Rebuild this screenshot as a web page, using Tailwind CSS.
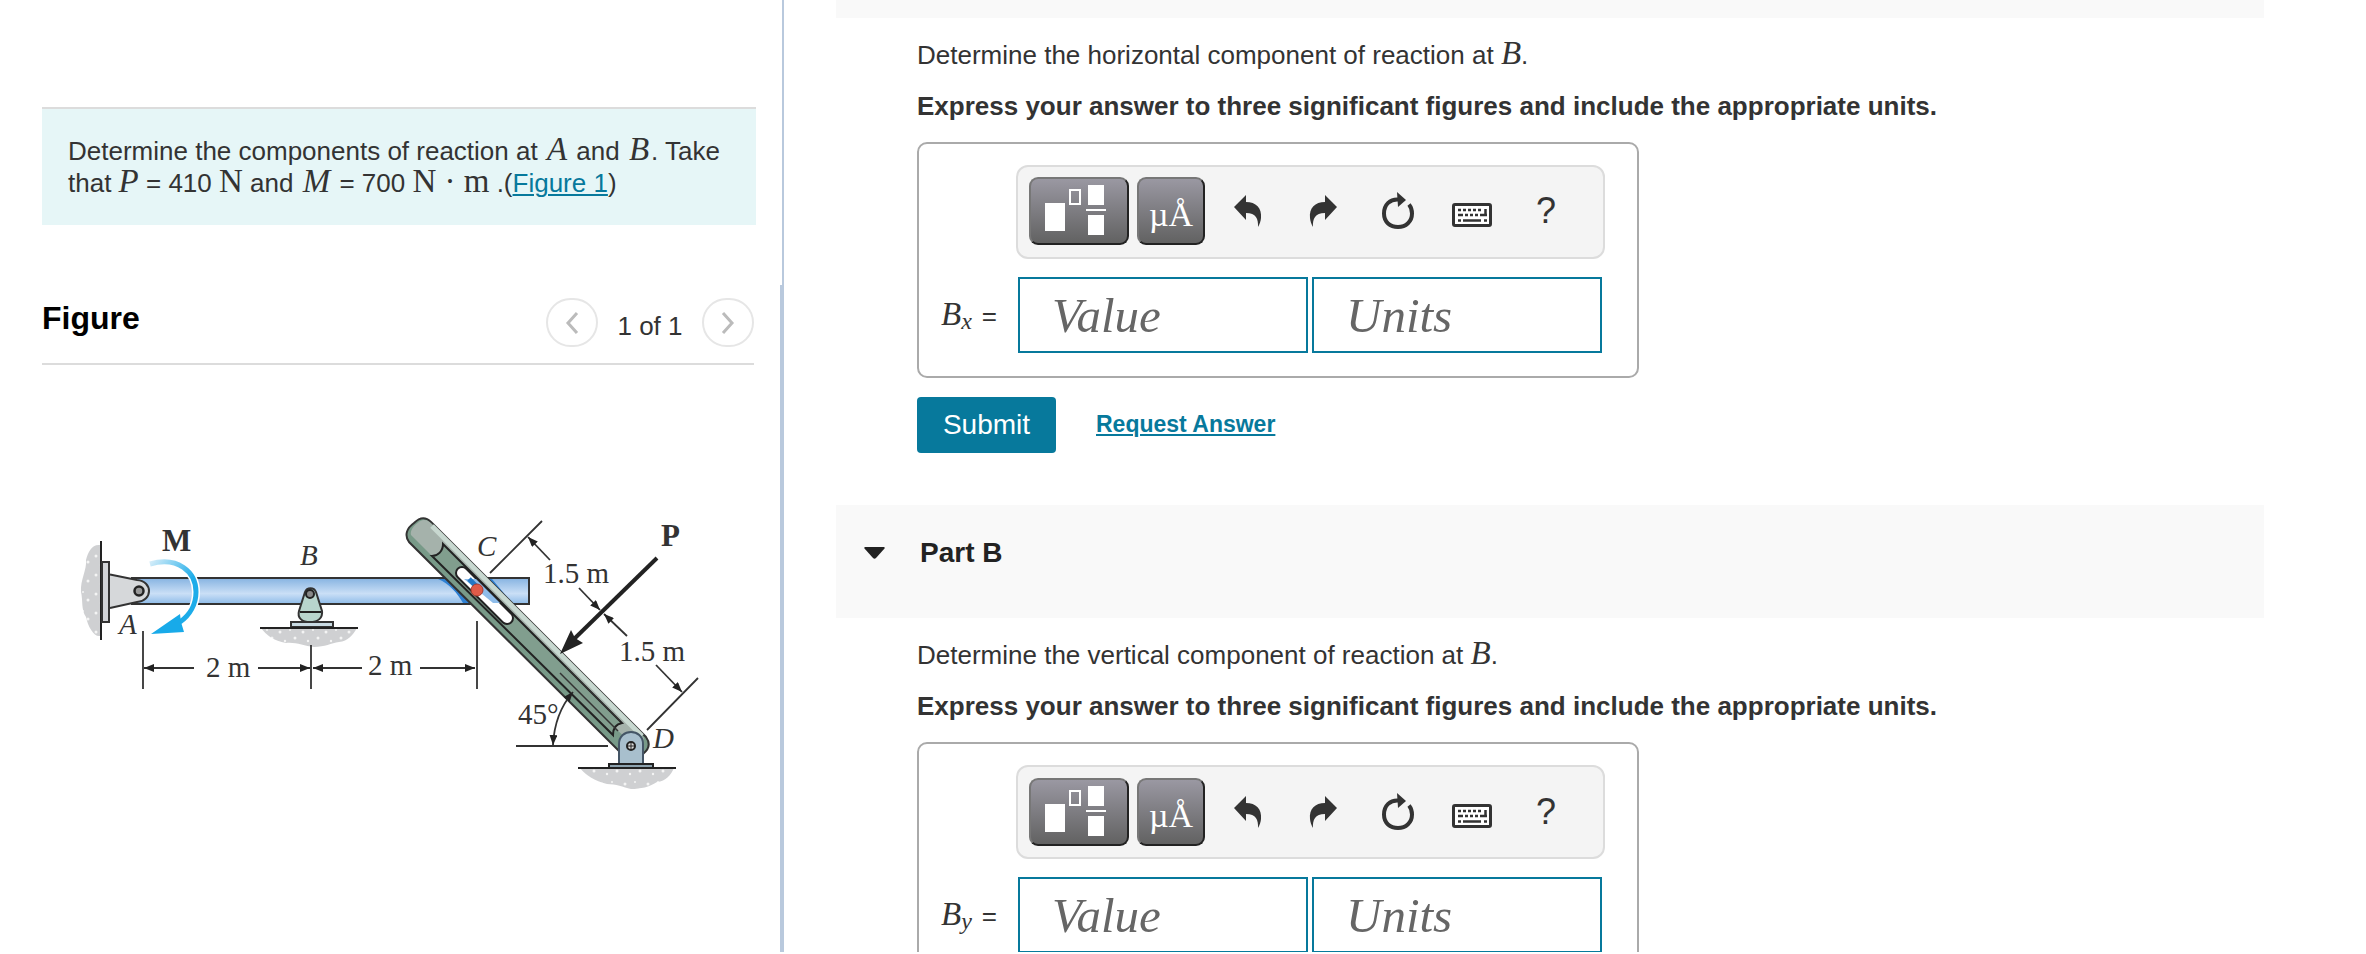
<!DOCTYPE html>
<html lang="en">
<head>
<meta charset="utf-8">
<meta name="viewport" content="width=device-width, initial-scale=1">
<title>Components of reaction</title>
<script src="https://cdn.jsdelivr.net/npm/@tailwindcss/browser@4"></script>
</head>
<body class="bg-white font-['Liberation_Sans',Arial,sans-serif] text-[26px] leading-8 text-[#333]">

<!-- Shared icons -->
<svg class="hidden" aria-hidden="true">
  <symbol id="templates" viewBox="0 0 72 52">
    <g fill="#fff"><rect x="2" y="18" width="20" height="28"/><rect x="45" y="0" width="16" height="20"/><rect x="43" y="24" width="20" height="2"/><rect x="45" y="30" width="16" height="20"/></g>
    <rect x="27" y="5" width="10" height="14" fill="none" stroke="#fff" stroke-width="2"/>
  </symbol>
  <symbol id="undo" viewBox="0 0 28 32">
    <path fill="#333" d="M0 12 12 0v7c10 0 16 6 15 16-.3 3-1.200 6-3 9 .5-8-2-14-12-14v7z"/>
  </symbol>
  <symbol id="reload" viewBox="0 0 34 38">
    <path fill="none" stroke="#333" stroke-width="4" d="M18 7.500C9 6.500 3 13 3 21.500 3 30 9 35 17 35s14-5.500 14-13.500c0-4-1-6.500-3-9"/>
    <path fill="#333" d="M16 0 25 8 17 15z"/>
  </symbol>
  <symbol id="keyboard" viewBox="0 0 40 24">
    <rect x="1.500" y="1.500" width="37" height="21" rx="1.500" fill="#fff" stroke="#333" stroke-width="3"/>
    <path stroke="#333" stroke-width="2.500" fill="none" d="M6 7h3m2 0h3m2 0h3m2 0h3m2 0h3M6 12h5m2 0h3m2 0h3m2 0h3m2 0h7M33.500 6v7M6 17.500h3m2 0h18m3 0h3"/>
  </symbol>
</svg>

<div class="flex h-screen overflow-hidden pb-0.5">
  <aside class="flex w-[784px] shrink-0 flex-col">
    <div class="border-r-2 border-[#b9c9dd] pt-[107px] pr-[26px] pb-[60px] pl-[42px]">
      <p class="border-t-2 border-[#dcdcdc] bg-[#e6f6f7] px-[26px] py-[26px]">Determine the components of reaction at <i class="mx-0.5 font-['Liberation_Serif',serif] text-[33px] leading-[0px]">A</i> and <i class="mx-0.5 font-['Liberation_Serif',serif] text-[33px] leading-[0px]">B</i>. Take that <i class="font-['Liberation_Serif',serif] text-[33px] leading-[0px]">P</i> = 410 <span class="font-['Liberation_Serif',serif] text-[33px] leading-[0px]">N</span> and <i class="mx-0.5 font-['Liberation_Serif',serif] text-[33px] leading-[0px]">M</i> = 700 <span class="font-['Liberation_Serif',serif] text-[33px] leading-[0px]">N · m</span> .(<a href="#figure" class="text-[#07799c] underline decoration-2 underline-offset-2">Figure 1</a>)</p>
    </div>
    <section id="figure" class="min-h-0 flex-1 border-r-4 border-[#b9c9dd] pt-[13px] pr-[26px] pl-[42px]">
      <header class="flex border-b-2 border-[#dcdcdc] pb-4">
        <h2 class="mt-0.5 flex-1 text-[32px] leading-9 font-bold text-black">Figure</h2>
        <button aria-label="Previous figure" class="flex h-[49px] w-[52px] items-center justify-center rounded-full border-2 border-[#e6e6e6]"><svg class="h-[22px] w-[14px]" viewBox="0 0 14 22"><path d="M12 1 3 11l9 10" fill="none" stroke="#bbb" stroke-width="3"/></svg></button>
        <span class="mt-3 w-[104px] text-center">1 of 1</span>
        <button aria-label="Next figure" class="flex h-[49px] w-[52px] items-center justify-center rounded-full border-2 border-[#e6e6e6]"><svg class="h-[22px] w-[14px]" viewBox="0 0 14 22"><path d="m2 1 9 10-9 10" fill="none" stroke="#bbb" stroke-width="3"/></svg></button>
      </header>

      <svg class="mt-[135px] ml-[18px] h-[300px] w-[660px]" viewBox="60 500 660 300" font-family="'Liberation Serif', serif" font-size="29" fill="#333" role="img" aria-label="Beam AB with slotted bar CD">
        <defs>
          <linearGradient id="beam" x1="0" y1="0" x2="0" y2="1"><stop offset="0" stop-color="#86b3e1"/><stop offset=".6" stop-color="#cadff6"/><stop offset="1" stop-color="#8ebbe8"/></linearGradient>
          <linearGradient id="moment" x1="0" y1="0" x2="1" y2="1"><stop offset="0" stop-color="#d5edf9"/><stop offset=".6" stop-color="#1dace9"/></linearGradient>
          <pattern id="gravel" width="23" height="19" patternUnits="userSpaceOnUse"><path fill="#cfd0d2" d="M0 0h23v19H0z"/><g fill="#f4f4f4"><circle cx="4" cy="5" r="1.500"/><circle cx="14" cy="3" r="1"/><circle cx="19" cy="11" r="1.500"/><circle cx="9" cy="14" r="1.200"/></g></pattern>
          <marker id="tip" viewBox="0 0 10 8" refX="10" refY="4" markerWidth="10" markerHeight="8" markerUnits="userSpaceOnUse" orient="auto-start-reverse"><path d="M0 0 10 4 0 8z" fill="#222"/></marker>
        </defs>

        <!-- wall and pin at A -->
        <path fill="url(#gravel)" d="M100 545c-8-1-12 7-14 15 1 10-6 20-5 32 2 8 0 18 5 25 2 10 8 20 14 19z"/>
        <path d="M101 541v99" stroke="#222" stroke-width="2"/>
        <rect x="102" y="562" width="7" height="60" fill="#d3d5d8" stroke="#333" stroke-width="2"/>
        <path d="M132 578h397v26H132z" fill="url(#beam)" stroke="#333" stroke-width="2"/>
        <path d="M110 574.500 137 580c16 1 16 21 0 22l-27 6z" fill="#d6d8da"/>
        <path d="M110 574.500 137 580c16 1 16 21 0 22l-27 6" fill="none" stroke="#333" stroke-width="2"/>
        <circle cx="139" cy="591" r="4.500" fill="#999" stroke="#222" stroke-width="2.500"/>

        <!-- moment arrow -->
        <path d="M150 564c28-8 46 8 46 28 0 12-6 23-16 30" fill="none" stroke="#fff" stroke-width="8"/>
        <path d="M150 564c28-8 46 8 46 28 0 12-6 23-16 30" fill="none" stroke="url(#moment)" stroke-width="5"/>
        <path d="M151 634 180 614l1 8 3 10z" fill="#18aae9"/>

        <!-- rocker at B -->
        <path fill="url(#gravel)" d="M261 628h96c-4 7-9 13-18 14-8 1-14 5-25 5-10-1-18-5-28-4-12-2-20-8-25-15z"/>
        <path d="M299 611 305 592c2-5 9-5 11 0l6 19c1 7-4 11-12 11s-13-4-11-11z" fill="#b8d5cd" stroke="#333" stroke-width="2"/>
        <path d="M300 612h21" stroke="#222" stroke-width="2"/><circle cx="310" cy="594" r="4" fill="#888" stroke="#222" stroke-width="2"/>
        <path d="M291 622h42v5h-42z" fill="#c9dbe3" stroke="#333" stroke-width="2"/><path d="M260 628h98" stroke="#222" stroke-width="2"/>

        <!-- slotted bar CD -->
        <path d="M438 579c12 5 19 14 25 24h12l-27-24zM470 579l10 10 18 14h14l-20-24z" fill="#2f80d2"/>
        <path d="M409 542c-5-7-2-14 5-19 6-6 12-6 17-1l215 215c5 7 2 13-3 17h-21z" fill="#789a88" stroke="#333" stroke-width="2"/>
        <path d="M411 535c-2-6 8-15 13-15 4 0 6 2 9 5l211 213-3 14-10-9-199-187z" fill="#a5b2ab"/>
        <path d="m432 526 210 210" stroke="#c8d8d0" stroke-width="5"/>
        <path d="M443 544 622 723c-6 1-9 5-9 12L432 556c6 0 11-5 11-12z" fill="#819e8e" stroke="#222" stroke-width="2"/>
        <path d="m560 673 58 58m-52-64 54 54" stroke="#333" stroke-width="1.500"/>
        <path d="m462 573 45 45" stroke="#222" stroke-width="14" stroke-linecap="round"/>
        <path d="m462 573 45 45" stroke="#fff" stroke-width="10" stroke-linecap="round"/>
        <path d="M464 579h12l24 24h-7z" fill="#8fbdea"/><path d="m469 579 8 8" stroke="#2378c5" stroke-width="5"/>
        <circle cx="477" cy="590" r="6" fill="#df5b49" stroke="#a63c31"/>

        <!-- pin at D -->
        <path fill="url(#gravel)" d="M580 768h94c-3 7-8 13-17 14-8 5-16 7-26 7-8-2-15-5-24-5-12-3-22-9-27-16z"/>
        <path d="M619 764v-20c0-16 24-16 24 0v20z" fill="#a8bfcd" stroke="#456" stroke-width="2"/>
        <circle cx="631" cy="746" r="4" fill="#ddd" stroke="#222" stroke-width="2"/><path d="M628 746h6m-3-3v6" stroke="#222"/>
        <path d="M609 764h44v4h-44z" fill="#8ca2ae" stroke="#222" stroke-width="2"/><path d="M578 768h98" stroke="#222" stroke-width="2"/>

        <!-- dimensions -->
        <g stroke="#333" stroke-width="1.800" fill="none">
          <path d="M143 631v58M311 645v44M477 621v68M490 573l52-52M647 730l51-52M516 746h92"/>
          <g marker-end="url(#tip)"><path d="M194 668h-50"/><path d="M258 668h52"/><path d="M362 668h-49"/><path d="M420 668h55"/><path d="m550 560-22-23"/><path d="m579 588 21 22"/><path d="m627 636-23-22"/><path d="m656 665 26 27"/></g>
          <path d="M553 745c1-20 7-38 20-53" marker-start="url(#tip)" marker-end="url(#tip)"/>
        </g>
        <path d="M657 558 572 641" stroke="#222" stroke-width="4"/><path d="M560 654 571 630l4 8 8 5z" fill="#222"/>

        <text x="162" y="551" font-weight="bold" font-size="31">M</text>
        <text x="661" y="546" font-weight="bold" font-size="31">P</text>
        <g font-style="italic"><text x="300" y="565">B</text><text x="119" y="634">A</text><text x="477" y="556">C</text><text x="653" y="748">D</text></g>
        <text x="206" y="677">2 m</text><text x="368" y="675">2 m</text>
        <text x="543" y="583">1.5 m</text><text x="619" y="661">1.5 m</text><text x="518" y="724">45°</text>
      </svg>
    </section>
  </aside>

  <main class="min-w-0 flex-1 overflow-hidden pr-[102px] pl-[52px]">
    <div class="h-[18px] bg-[#f9f9f9]"></div>
    <section class="pl-[81px]">
      <p class="mt-[21px]">Determine the horizontal component of reaction at <i class="font-['Liberation_Serif',serif] text-[33px] leading-[0px]">B</i>.</p>
      <p class="mt-[19px] font-bold">Express your answer to three significant figures and include the appropriate units.</p>
      <div class="mt-5 w-[722px] rounded-[10px] border-2 border-[#aaa] pt-[21px] pr-8 pb-[23px]">
        <div class="ml-[97px] flex h-[94px] items-center rounded-xl border-2 border-[#dcdcdc] bg-[#f4f4f4] pb-0.5 pl-[11px]">
          <button aria-label="Templates" class="flex h-[68px] w-[100px] items-center justify-center rounded-[9px] border-2 border-t-[#777] border-r-[#222] border-b-[#222] border-l-[#777] bg-linear-to-b from-[#9a98a2] to-[#626262]"><svg class="h-[52px] w-[72px]"><use href="#templates"/></svg></button>
          <button aria-label="Units and symbols" class="ml-2 h-[68px] w-[68px] rounded-[9px] border-2 border-t-[#777] border-r-[#222] border-b-[#222] border-l-[#777] bg-linear-to-b from-[#9a98a2] to-[#626262] pt-2 font-['Liberation_Serif',serif] text-[34px] text-white">µÅ</button>
          <button aria-label="Undo" class="ml-1.5 flex h-[68px] w-[74px] items-center justify-center"><svg class="h-8 w-7"><use href="#undo"/></svg></button>
          <button aria-label="Redo" class="flex h-[68px] w-[76px] items-center justify-center"><svg class="h-8 w-7 -scale-x-100"><use href="#undo"/></svg></button>
          <button aria-label="Reset" class="flex h-[68px] w-[74px] items-center justify-center"><svg class="h-[38px] w-[34px]"><use href="#reload"/></svg></button>
          <button aria-label="Keyboard shortcuts" class="flex h-[68px] w-[74px] items-center justify-center pt-2"><svg class="h-6 w-10"><use href="#keyboard"/></svg></button>
          <button aria-label="Help" class="h-[68px] w-[74px] text-[36px]">?</button>
        </div>
        <div class="mt-[18px] flex items-center">
          <label for="bx" class="flex w-[99px] items-baseline pl-[22px] whitespace-nowrap"><i class="font-['Liberation_Serif',serif] text-[33px] leading-8">B</i><i class="mt-1 translate-y-1 font-['Liberation_Serif',serif] text-[24px] leading-6">x</i><span class="ml-2.5">=</span></label>
          <input id="bx" type="text" placeholder="Value" class="h-[76px] w-[290px] border-2 border-[#07799c] pl-8 font-['Liberation_Serif',serif] text-[49px] italic placeholder:text-[#666]">
          <input type="text" aria-label="Units" placeholder="Units" class="ml-1 h-[76px] w-[290px] border-2 border-[#07799c] pl-8 font-['Liberation_Serif',serif] text-[49px] italic placeholder:text-[#666]">
        </div>
      </div>
      <div class="mt-[19px] flex items-center">
        <button class="h-14 w-[139px] rounded bg-[#07799c] text-[28px] text-white">Submit</button>
        <a href="#answer" class="ml-10 pb-0.5 text-[23px] font-bold text-[#07799c] underline decoration-2 underline-offset-2">Request Answer</a>
      </div>
    </section>

    <h2 class="mt-[52px] bg-[#f9f9f9] pt-8 pb-[49px] pl-7 font-bold text-[#222]">
      <button class="flex items-center gap-[35px] text-[28px]" aria-expanded="true"><svg class="h-3 w-[21px]" viewBox="0 0 21 12"><path d="M1 0h19q1 0 .5 1.500L12 11q-1.500 1.500-3 0L.5 1.500Q0 0 1 0z" fill="#222"/></svg>Part B</button>
    </h2>
    <section class="pl-[81px]">
      <p class="mt-[21px]">Determine the vertical component of reaction at <i class="font-['Liberation_Serif',serif] text-[33px] leading-[0px]">B</i>.</p>
      <p class="mt-[19px] font-bold">Express your answer to three significant figures and include the appropriate units.</p>
      <div class="mt-5 w-[722px] rounded-[10px] border-2 border-[#aaa] pt-[21px] pr-8 pb-[23px]">
        <div class="ml-[97px] flex h-[94px] items-center rounded-xl border-2 border-[#dcdcdc] bg-[#f4f4f4] pl-[11px]">
          <button aria-label="Templates" class="flex h-[68px] w-[100px] items-center justify-center rounded-[9px] border-2 border-t-[#777] border-r-[#222] border-b-[#222] border-l-[#777] bg-linear-to-b from-[#9a98a2] to-[#626262]"><svg class="h-[52px] w-[72px]"><use href="#templates"/></svg></button>
          <button aria-label="Units and symbols" class="ml-2 h-[68px] w-[68px] rounded-[9px] border-2 border-t-[#777] border-r-[#222] border-b-[#222] border-l-[#777] bg-linear-to-b from-[#9a98a2] to-[#626262] pt-2 font-['Liberation_Serif',serif] text-[34px] text-white">µÅ</button>
          <button aria-label="Undo" class="ml-1.5 flex h-[68px] w-[74px] items-center justify-center"><svg class="h-8 w-7"><use href="#undo"/></svg></button>
          <button aria-label="Redo" class="flex h-[68px] w-[76px] items-center justify-center"><svg class="h-8 w-7 -scale-x-100"><use href="#undo"/></svg></button>
          <button aria-label="Reset" class="flex h-[68px] w-[74px] items-center justify-center"><svg class="h-[38px] w-[34px]"><use href="#reload"/></svg></button>
          <button aria-label="Keyboard shortcuts" class="flex h-[68px] w-[74px] items-center justify-center pt-2"><svg class="h-6 w-10"><use href="#keyboard"/></svg></button>
          <button aria-label="Help" class="h-[68px] w-[74px] text-[36px]">?</button>
        </div>
        <div class="mt-[18px] flex items-center">
          <label for="by" class="flex w-[99px] items-baseline pl-[22px] whitespace-nowrap"><i class="font-['Liberation_Serif',serif] text-[33px] leading-8">B</i><i class="mt-1 translate-y-1 font-['Liberation_Serif',serif] text-[24px] leading-6">y</i><span class="ml-2.5">=</span></label>
          <input id="by" type="text" placeholder="Value" class="h-[76px] w-[290px] border-2 border-[#07799c] pl-8 font-['Liberation_Serif',serif] text-[49px] italic placeholder:text-[#666]">
          <input type="text" aria-label="Units" placeholder="Units" class="ml-1 h-[76px] w-[290px] border-2 border-[#07799c] pl-8 font-['Liberation_Serif',serif] text-[49px] italic placeholder:text-[#666]">
        </div>
      </div>
    </section>
  </main>
</div>
</body>
</html>
